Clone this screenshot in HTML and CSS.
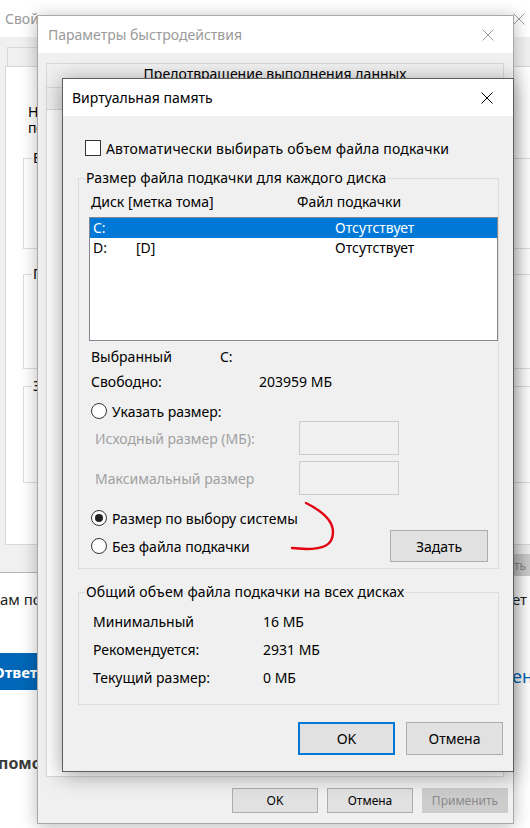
FILE: index.html
```html
<!DOCTYPE html>
<html lang="ru">
<head>
<meta charset="utf-8">
<title>Виртуальная память</title>
<link rel="stylesheet" href="styles.css">
</head>
<body>
<div class="desktop">

  <div class="web">
    <div class="web-row web-row-1">
      <span class="web-text">ам помогли эти сведения?</span>
      <span class="web-text">ет дать ответ</span>
    </div>
    <div class="web-row web-row-2">
      <span class="web-btn">Ответить</span>
      <span class="web-link">енить</span>
    </div>
    <div class="web-row web-row-3">
      <span class="web-heading">помощь?</span>
    </div>
  </div>

  <section class="win sys">
    <header class="titlebar">
      <span class="title">Свойства системы</span>
      <svg class="close-x" width="12" height="12" viewBox="0 0 12 12"><path d="M0.5 0.5 L11.5 11.5 M11.5 0.5 L0.5 11.5" stroke="#9a9a9a" stroke-width="1" fill="none"/></svg>
    </header>
    <div class="sys-body">
      <div class="sys-tabs">
        <span class="sys-tab">Имя компьютера</span>
        <span class="sys-tab">Оборудование</span>
      </div>
      <div class="sys-panel">
        <p class="sys-note">Необходимо иметь права администратора для изменения большинства<br>перечисленных параметров.</p>
        <fieldset class="sys-group sys-g1"><legend>Быстродействие</legend></fieldset>
        <fieldset class="sys-group sys-g2"><legend>Профили пользователей</legend></fieldset>
        <fieldset class="sys-group sys-g3"><legend>Загрузка и восстановление</legend></fieldset>
      </div>
      <div class="sys-buttons">
        <button type="button" class="btn sys-btn">OK</button>
        <button type="button" class="btn sys-btn">Отмена</button>
        <button type="button" class="btn sys-btn disabled">Применить</button>
      </div>
    </div>
  </section>

  <section class="win perf">
    <header class="titlebar">
      <span class="title">Параметры быстродействия</span>
      <svg class="close-x" width="12" height="12" viewBox="0 0 12 12"><path d="M0.5 0.5 L11.5 11.5 M11.5 0.5 L0.5 11.5" stroke="#9a9a9a" stroke-width="1" fill="none"/></svg>
    </header>
    <div class="perf-body">
      <div class="perf-tabrow perf-tabrow-1">
        <span class="perf-tab wide">Предотвращение выполнения данных</span>
      </div>
      <div class="perf-tabrow perf-tabrow-2">
        <span class="perf-tab">Визуальные эффекты</span>
        <span class="perf-tab active">Дополнительно</span>
      </div>
      <div class="perf-panel"></div>
      <div class="perf-buttons">
        <button type="button" class="btn perf-btn">OK</button>
        <button type="button" class="btn perf-btn">Отмена</button>
        <button type="button" class="btn perf-btn disabled">Применить</button>
      </div>
    </div>
  </section>

  <section class="win vm">
    <header class="titlebar">
      <span class="title">Виртуальная память</span>
      <svg class="close-x" width="12" height="12" viewBox="0 0 12 12"><path d="M0.5 0.5 L11.5 11.5 M11.5 0.5 L0.5 11.5" stroke="#000" stroke-width="1" fill="none"/></svg>
    </header>
    <div class="vm-body">
      <label class="check-row">
        <span class="check"></span>
        <span class="check-label">Автоматически выбирать объем файла подкачки</span>
      </label>

      <fieldset class="group group-disks">
        <legend>Размер файла подкачки для каждого диска</legend>
        <div class="list-head">
          <span>Диск [метка тома]</span>
          <span>Файл подкачки</span>
        </div>
        <div class="listbox">
          <div class="list-row selected"><span>C:</span><span></span><span>Отсутствует</span></div>
          <div class="list-row"><span>D:</span><span>[D]</span><span>Отсутствует</span></div>
        </div>
        <div class="info-grid">
          <span>Выбранный</span><span class="info-drive">C:</span>
          <span>Свободно:</span><span class="info-free">203959 МБ</span>
        </div>
        <div class="radio-row radio-first">
          <span class="radio"></span><span>Указать размер:</span>
        </div>
        <div class="size-grid">
          <span class="size-label">Исходный размер (МБ):</span><input class="size-input" type="text" disabled>
          <span class="size-label">Максимальный размер</span><input class="size-input" type="text" disabled>
        </div>
        <div class="radio-row radio-system">
          <span class="radio on"></span><span>Размер по выбору системы</span>
        </div>
        <div class="last-row">
          <div class="radio-row">
            <span class="radio"></span><span>Без файла подкачки</span>
          </div>
          <button type="button" class="btn set-btn">Задать</button>
        </div>
      </fieldset>

      <fieldset class="group group-total">
        <legend>Общий объем файла подкачки на всех дисках</legend>
        <div class="total-grid">
          <span>Минимальный</span><span>16 МБ</span>
          <span>Рекомендуется:</span><span>2931 МБ</span>
          <span>Текущий размер:</span><span>0 МБ</span>
        </div>
      </fieldset>

      <div class="vm-buttons">
        <button type="button" class="btn vm-btn default">OK</button>
        <button type="button" class="btn vm-btn">Отмена</button>
      </div>
    </div>
  </section>

  <svg class="scribble" width="55" height="56" viewBox="0 0 55 56"><path d="M21 5 C37 13 48 22 48 34 C48 48 37 51 21 51 L7 50" stroke="#e3000f" stroke-width="2.4" fill="none" stroke-linecap="round"/></svg>
</div>
</body>
</html>
```

FILE: styles.css
```css
* { box-sizing: border-box; }
html, body { margin: 0; padding: 0; }
body {
  font-family: "Noto Sans", "Open Sans", "DejaVu Sans", sans-serif;
  font-size: 14px;
  color: #000;
  background: #fff;
}
p { margin: 0; }
fieldset { margin: 0; min-width: 0; }
button { font-family: inherit; color: inherit; margin: 0; padding: 0; }

.desktop {
  position: relative;
  width: 530px;
  height: 828px;
  overflow: hidden;
  background: #fff;
}

/* ---------- web page behind ---------- */
.web {
  position: absolute;
  left: 0;
  top: 573px;
  width: 530px;
  height: 255px;
  background: #fff;
}
.web-row {
  display: grid;
  grid-template-columns: 512px 1fr;
  white-space: nowrap;
}
.web-row-1 { padding-top: 16px; line-height: 20px; font-size: 15px; color: #1e1e1e; }
.web-row-2 { margin-top: 44px; align-items: center; }
.web-btn {
  display: flex;
  align-items: center;
  height: 37px;
  margin-left: -7px;
  background: #0067b8;
  color: #fff;
  font-weight: 700;
  font-size: 15px;
  overflow: hidden;
}
.web-link { color: #0067b8; font-size: 18px; padding-top: 8px; }
.web-row-3 { margin-top: 61px; }
.web-heading { margin-left: -2px; font-size: 16px; font-weight: 700; color: #3b3b3b; line-height: 24px; }

/* ---------- generic windows ---------- */
.win {
  position: absolute;
  display: flex;
  flex-direction: column;
  background: #f0f0f0;
}
.titlebar {
  flex: none;
  display: flex;
  align-items: center;
  justify-content: space-between;
  height: 37px;
  background: #fff;
}
.title { font-size: 14px; white-space: nowrap; }
.close-x { display: block; flex: none; }

.btn {
  display: flex;
  align-items: center;
  justify-content: center;
  background: #e1e1e1;
  border: 1px solid #adadad;
}
.btn.disabled { background: #cccccc; border-color: #cccccc; color: #8a8a8a; }

/* ---------- System properties (back) ---------- */
.sys {
  left: -3px;
  top: -1px;
  width: 546px;
  height: 574px;
  border: 1px solid #b5b5b5;
}
.sys .titlebar { padding: 0 17px 0 7px; }
.sys .title { color: #9a9a9a; }
.sys-body {
  flex: 1;
  display: flex;
  flex-direction: column;
  padding: 10px 0 0 7px;
}
.sys-tabs { display: flex; height: 19px; padding-left: 2px; }
.sys-tab {
  padding: 0 10px 0 34px;
  border: 1px solid #d9d9d9;
  border-bottom: none;
  line-height: 18px;
  font-size: 14px;
  color: #000;
  background: #f0f0f0;
  white-space: nowrap;
}
.sys-panel {
  height: 479px;
  background: #fff;
  border: 1px solid #d9d9d9;
  padding: 37px 0 0 17px;
}
.sys-note { margin-left: 5px; line-height: 16px; white-space: nowrap; letter-spacing: -0.4px; }
.sys-group {
  padding: 0;
  border: 1px solid #dcdcdc;
}
.sys-group legend { margin-left: 8px; padding: 0 1px; line-height: 20px; }
.sys-g1 { margin-top: 12px; height: 101px; }
.sys-g2 { margin-top: 15px; height: 105px; }
.sys-g3 { margin-top: 7px; height: 107px; }
.sys-buttons {
  display: flex;
  justify-content: flex-end;
  gap: 8px;
  margin-top: 9px;
  padding-right: 6px;
}
.sys-btn { width: 86px; height: 22px; font-size: 12px; }

/* ---------- Performance options (middle) ---------- */
.perf {
  left: 37px;
  top: 15px;
  width: 477px;
  height: 809px;
  border: 1px solid #a8a8a8;
  box-shadow: 0 2px 16px rgba(0, 0, 0, 0.28);
}
.perf .titlebar { padding: 0 19px 0 10px; }
.perf .title { color: #9a9a9a; }
.perf-body {
  flex: 1;
  display: flex;
  flex-direction: column;
  padding: 10px 9px 0 8px;
}
.perf-tabrow { display: flex; }
.perf-tabrow-1 { height: 24px; }
.perf-tabrow-2 { height: 22px; }
.perf-tab {
  flex: 1;
  text-align: center;
  border: 1px solid #d9d9d9;
  border-bottom: none;
  background: #f0f0f0;
  line-height: 22px;
  white-space: nowrap;
  overflow: hidden;
}
.perf-tab.wide { line-height: 20px; }
.perf-tab.active { background: #fff; }
.perf-panel {
  height: 668px;
  background: #fff;
  border: 1px solid #d9d9d9;
}
.perf-buttons {
  display: flex;
  justify-content: flex-end;
  gap: 9px;
  margin-top: 11px;
  margin-right: -4px;
}
.perf-btn { width: 86px; height: 25px; font-size: 12px; }

/* ---------- Virtual memory (front) ---------- */
.vm {
  left: 62px;
  top: 78px;
  width: 452px;
  height: 694px;
  border: 1px solid #5e5e5e;
  box-shadow: 0 3px 20px rgba(0, 0, 0, 0.38);
}
.vm .titlebar { padding: 0 20px 0 9px; }
.vm-body {
  flex: 1;
  display: flex;
  flex-direction: column;
  padding: 0 10px 0 15px;
}

.check-row {
  display: flex;
  align-items: center;
  height: 20px;
  margin-top: 22px;
  padding-left: 7px;
}
.check {
  width: 16px;
  height: 16px;
  border: 1px solid #333;
  background: #fff;
  flex: none;
}
.check-label { margin-left: 5px; white-space: nowrap; letter-spacing: 0.18px; }

.group {
  margin-right: 4px;
  border: 1px solid #dcdcdc;
}
.group legend { margin-left: 6px; padding: 0 1px; line-height: 20px; white-space: nowrap; letter-spacing: 0.12px; }
.group-disks { margin-top: 10px; padding: 4px 0 6px 10px; }
.group-disks legend { margin-left: -4px; }
.group-total { margin-top: 13px; padding: 6px 0 12px 14px; }
.group-total legend { margin-left: -8px; }

.list-head {
  display: grid;
  grid-template-columns: 206px 1fr;
  padding-left: 2px;
  line-height: 20px;
}
.listbox {
  margin-top: 5px;
  height: 124px;
  background: #fff;
  border: 1px solid #828790;
}
.list-row {
  display: grid;
  grid-template-columns: 43px 199px 1fr;
  padding-left: 3px;
  line-height: 20px;
  white-space: nowrap;
}
.list-row.selected { background: #0078d7; color: #fff; }

.info-grid {
  display: grid;
  grid-template-columns: 129px 39px 1fr;
  margin-top: 3px;
  padding-left: 2px;
  line-height: 25px;
}
.info-drive { grid-column: 2 / 4; }
.info-free { grid-column: 3; }

.radio-row {
  display: flex;
  align-items: center;
  gap: 5px;
  height: 20px;
  padding-left: 2px;
  white-space: nowrap;
}
.radio {
  width: 16px;
  height: 16px;
  border: 1px solid #333;
  border-radius: 50%;
  background: #fff;
  display: flex;
  align-items: center;
  justify-content: center;
  flex: none;
}
.radio.on::after {
  content: "";
  width: 8px;
  height: 8px;
  border-radius: 50%;
  background: #222;
}
.radio-first { margin-top: 7px; }

.size-grid {
  display: grid;
  grid-template-columns: 210px 100px;
  row-gap: 6px;
  align-items: center;
}
.size-label { padding-left: 6px; color: #a0a0a0; white-space: nowrap; }
.size-input {
  width: 100px;
  height: 34px;
  border: 1px solid #cccccc;
  background: #f0f0f0;
  margin: 0;
  padding: 0;
}
.radio-system { margin-top: 13px; }

.last-row {
  display: flex;
  align-items: center;
  justify-content: space-between;
  height: 32px;
  margin-top: 2px;
}
.set-btn { width: 98px; height: 32px; margin-right: 10px; font-size: 14px; }

.total-grid {
  display: grid;
  grid-template-columns: 170px 1fr;
  line-height: 28px;
}

.vm-buttons {
  display: flex;
  justify-content: flex-end;
  gap: 11px;
  margin-top: 17px;
}
.vm-btn { width: 97px; height: 33px; font-size: 14px; }
.vm-btn.default { border: 2px solid #0078d7; }

.scribble {
  position: absolute;
  left: 285px;
  top: 498px;
}
```
